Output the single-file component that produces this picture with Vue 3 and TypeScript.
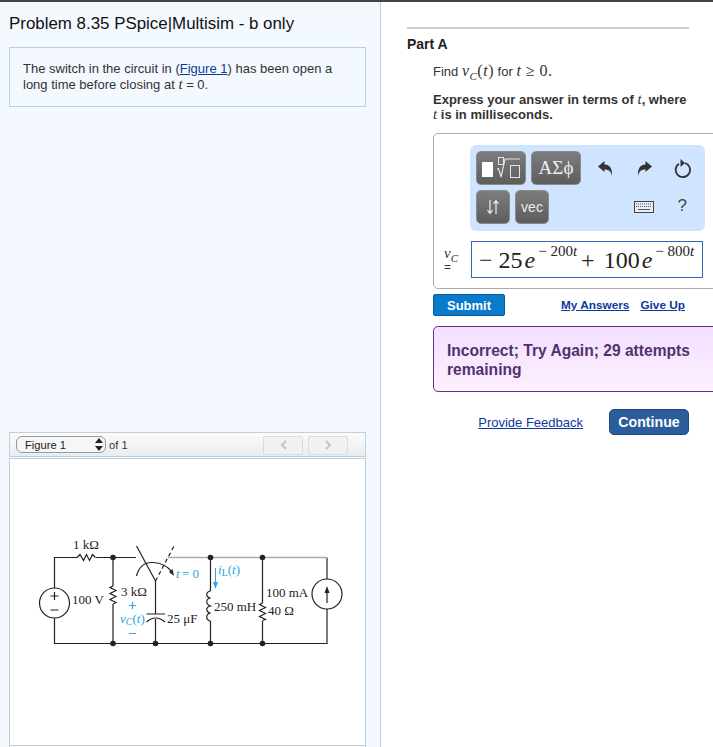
<script setup lang="ts">
interface Label {
  text: string
  x: number
  y: number
  blue?: boolean
  italic?: boolean
}

// circuit labels sit in page coordinates, the svg viewBox starts at the panel corner
const labels: Label[] = [
  { text: '1 kΩ', x: 73, y: 548 },
  { text: '100 V', x: 72, y: 603 },
  { text: '3 kΩ', x: 121, y: 595 },
  { text: '25 μF', x: 167, y: 622 },
  { text: '250 mH', x: 214, y: 610 },
  { text: '100 mA', x: 266, y: 596 },
  { text: '40 Ω', x: 268, y: 614 },
  { text: '= 0', x: 182, y: 577, blue: true },
  { text: 't', x: 176, y: 577, blue: true, italic: true },
]

const nodes: [number, number][] = [
  [113, 556.5], [210.5, 556.5], [262.5, 556.5],
  [113, 642.5], [155.5, 642.5], [210.5, 642.5], [262.5, 642.5],
]
</script>

<template>
  <div class="page">
    <section class="left">
      <h1 class="title">Problem 8.35 PSpice|Multisim - b only</h1>
      <div class="intro">
        The switch in the circuit in (<a class="link">Figure 1</a>) has been open a<br />
        long time before closing at <i class="math">t</i> = 0.
      </div>

      <div class="fig-bar">
        <div class="fig-select">
          <span>Figure 1</span>
          <svg width="8" height="13" viewBox="0 0 8 13"><path d="M4 0 8 5H0ZM4 13 0 8H8Z" fill="#222" /></svg>
        </div>
        <span class="fig-of">of 1</span>
        <div class="fig-nav">
          <button class="fig-btn">
            <svg width="7" height="10" viewBox="0 0 7 10"><path d="M6 1 2 5l4 4" fill="none" stroke="#c4c4c4" stroke-width="2" /></svg>
          </button>
          <button class="fig-btn">
            <svg width="7" height="10" viewBox="0 0 7 10"><path d="M1 1l4 4-4 4" fill="none" stroke="#c4c4c4" stroke-width="2" /></svg>
          </button>
        </div>
      </div>

      <div class="fig-panel">
        <svg class="circuit" width="355" height="286" viewBox="10 458 355 286">
          <!-- wires -->
          <g fill="none" stroke="#222" stroke-width="1.2">
            <path d="M77 556.500H54.500V587M54.500 617V642.500H327V608M327 578V556.500" />
            <path d="M96 556.500H136M113 556.500V585M113 603V642.500" />
            <path d="M155.500 580V613M155.500 618V642.500M146.500 613H165M146.500 621Q155.500 613 165 621" />
            <path d="M210.500 556.500V590M210.500 620V642.500M262.500 556.500V602M262.500 620V642.500" />
            <path d="M77 556.500l3-3 3.500 6 3-6 3 6 3-6 3 3" />
            <path d="M113 585l-3 1.500 6 3-6 3 6 3-6 3 6 3-3 1.500" />
            <path d="M262.500 602l-3 1.500 6 3-6 3 6 3-6 3 6 3-3 1" />
            <path d="M210.500 590c-5 1-5 6 0 7-5 1-5 6 0 8-5 1-5 6 0 7-5 1-5 7 0 8" />
            <path d="M155.500 580 136.500 545" />
            <path d="M155.500 580 174 545" stroke-dasharray="4 3" />
            <path d="M136.500 575Q140 561 153 561.500Q165 562 172 571" />
            <circle cx="54.500" cy="602" r="15" />
            <circle cx="327" cy="593" r="15" />
            <path d="M54.500 591v8M50.500 595h8M50.500 609h8" />
            <path d="M327 602v-14" />
          </g>
          <path d="M168 556.500H327" stroke="#aaa" stroke-width="1.500" fill="none" />
          <path d="M327 585l-2.500 7h5ZM174 575l-5-4 3.500-3Z" fill="#222" />
          <circle v-for="n in nodes" :key="n.join()" :cx="n[0]" :cy="n[1]" r="2.800" fill="#222" />
          <path d="M215.500 567V584" stroke="#2aa7dd" stroke-width="1" />
          <path d="M215.500 588l-2.500-7h5Z" fill="#2aa7dd" />

          <!-- labels -->
          <text
            v-for="l in labels"
            :key="l.text"
            :x="l.x"
            :y="l.y"
            class="c-text"
            :class="{ 'c-blue': l.blue, 'c-italic': l.italic }"
          >{{ l.text }}</text>
          <text x="120" y="622" class="c-text c-blue"><tspan class="c-italic">v</tspan><tspan dy="2" font-size="10" class="c-italic">C</tspan><tspan dy="-2">(</tspan><tspan class="c-italic">t</tspan>)</text>
          <text x="218" y="573" class="c-text c-blue"><tspan class="c-italic">i</tspan><tspan dy="2" font-size="10">L</tspan><tspan dy="-2">(</tspan><tspan class="c-italic">t</tspan>)</text>
          <path d="M129 604.500h7M132.500 601v7M129 632.500h7" stroke="#2aa7dd" stroke-width="1.200" fill="none" />
        </svg>
      </div>
      <div class="fig-next"></div>
    </section>

    <section class="right">
      <hr class="rule" />
      <h2 class="part">Part A</h2>
      <p class="find">
        Find <span class="math"><i>v</i><sub><i>C</i></sub>(<i>t</i>)</span> for <span class="math"><i>t</i> ≥ 0.</span>
      </p>
      <p class="express">
        Express your answer in terms of <i class="math plain">t</i>, where<br />
        <i class="math plain">t</i> is in milliseconds.
      </p>

      <div class="answer">
        <div class="toolbar">
          <div class="tool-row">
            <button class="tool tool-templates">
              <svg width="40" height="28" viewBox="0 0 40 28">
                <rect x="1" y="8" width="11" height="15" fill="#fff" />
                <rect x="17.500" y="3.500" width="5" height="7" fill="none" stroke="#e4e4e4" />
                <path d="M16 15l1.500-.5L20 23l4-18h15" fill="none" stroke="#e4e4e4" stroke-width="1.200" />
                <rect x="29.500" y="11.500" width="9" height="12" fill="none" stroke="#e4e4e4" />
              </svg>
            </button>
            <button class="tool tool-symbols">ΑΣϕ</button>
            <div class="tool-icons">
              <svg width="15" height="17" viewBox="0 0 15 17"><path d="M0 6.500 6.500 1v3.500c4.500 0 8 3 7.500 11.500-1-4.500-3-6.500-7.500-6.500V12Z" fill="#333" /></svg>
              <svg width="15" height="17" viewBox="0 0 15 17"><path d="M15 6.500 8.500 1v3.500C4 4.500.5 7.500 1 16c1-4.500 3-6.500 7.500-6.500V12Z" fill="#333" /></svg>
              <svg class="reload" width="18" height="20" viewBox="0 0 18 20"><path d="M11 5A7.200 7.200 0 1 1 5 5.800" fill="none" stroke="#333" stroke-width="1.800" /><path d="M6.500 1v8l4.500-4Z" fill="#333" /></svg>
            </div>
          </div>
          <div class="tool-row">
            <button class="tool tool-updown">
              <svg width="14" height="16" viewBox="0 0 14 16"><path d="M4 1v13M1.500 11 4 14.500 6.500 11M10 15V2M7.500 5 10 1.500 12.500 5" fill="none" stroke="#eee" stroke-width="1.200" /></svg>
            </button>
            <button class="tool tool-vec">vec</button>
            <div class="tool-icons tool-icons-low">
              <svg width="20" height="12" viewBox="0 0 20 12">
                <rect x=".5" y=".5" width="19" height="11" fill="#e8eef4" stroke="#444" />
                <path d="M2 3h16M2 5.500h16" stroke="#556" stroke-dasharray="1 1" />
                <path d="M4 8.500h12" stroke="#556" />
              </svg>
              <span class="help">?</span>
            </div>
          </div>
        </div>

        <div class="answer-row">
          <div class="answer-label">
            <span class="math"><i>v</i><sub><i>C</i></sub></span>
            <span class="eq">=</span>
          </div>
          <div class="math-input">
            − 25<i>e</i><sup>− 200<i>t</i></sup><span class="plus">+</span>100<i>e</i><sup>− 800<i>t</i></sup>
          </div>
        </div>
      </div>

      <div class="actions">
        <button class="submit">Submit</button>
        <div class="action-links">
          <a class="link">My Answers</a>
          <a class="link">Give Up</a>
        </div>
      </div>

      <div class="feedback">Incorrect; Try Again; 29 attempts remaining</div>

      <div class="footer">
        <a class="link">Provide Feedback</a>
        <button class="continue">Continue</button>
      </div>
    </section>
  </div>
</template>

<style>
html,
body {
  margin: 0;
  background: #fff;
}
</style>

<style scoped>
.page {
  display: flex;
  width: 713px;
  height: 747px;
  overflow: hidden;
  border-top: 2px solid #444;
  box-sizing: border-box;
  font-family: "Liberation Sans", Arial, sans-serif;
  color: #333;
}

button {
  font-family: inherit;
  padding: 0;
  cursor: pointer;
}

.link {
  color: #0b3a9e;
  text-decoration: underline;
}

.math {
  font-family: "Liberation Serif", "DejaVu Serif", serif;
  line-height: 0;
}

.math sub {
  font-size: 11px;
  line-height: 0;
}

/* left column */
.left {
  flex: none;
  width: 381px;
  box-sizing: border-box;
  padding: 0 14px 0 9px;
  background: #f4f8ff;
  border-right: 1px solid #b9cfe2;
}

.title {
  margin: 12px 0 0;
  font-size: 16.900px;
  line-height: 20px;
  font-weight: 400;
  color: #111;
}

.intro {
  margin-top: 13px;
  padding: 13px 13px 0;
  height: 60px;
  box-sizing: border-box;
  border: 1px solid #b9cfe2;
  font-size: 13px;
  line-height: 16px;
}

.intro .math {
  font-size: 15px;
}

.fig-bar {
  display: flex;
  align-items: center;
  height: 25px;
  box-sizing: border-box;
  margin-top: 325px;
  padding: 0 17px 0 6px;
  border: 1px solid #b9cfe2;
  background: linear-gradient(#fbfbfb, #ececec);
  font-size: 11.200px;
}

.fig-select {
  display: flex;
  align-items: center;
  justify-content: space-between;
  width: 90px;
  height: 17px;
  box-sizing: border-box;
  padding: 0 2px 0 8px;
  border: 1px solid #999;
  border-radius: 6px;
  background: #f6f6f6;
  color: #222;
}

.fig-of {
  margin-left: 3px;
}

.fig-nav {
  display: flex;
  gap: 5px;
  margin-left: auto;
}

.fig-btn {
  display: flex;
  align-items: center;
  justify-content: center;
  width: 40px;
  height: 19px;
  margin-top: 1px;
  border: 1px solid #dcdcdc;
  border-radius: 2px;
  background: #f1f1f1;
}

.fig-panel {
  height: 288px;
  box-sizing: border-box;
  margin-top: 1px;
  border: 1px solid #b9cfe2;
  background: #fff;
}

.circuit {
  display: block;
}

.c-text {
  font-family: "Liberation Serif", "DejaVu Serif", serif;
  font-size: 13px;
  fill: #222;
}

.c-blue {
  fill: #2aa7dd;
}

.c-italic {
  font-style: italic;
}

.fig-next {
  height: 10px;
  border: 1px solid #b9cfe2;
  border-top: 0;
  background: #fff;
}

/* right column */
.right {
  flex: 1;
  min-width: 0;
  padding: 0 24px 0 26px;
}

.rule {
  height: 2px;
  margin: 25px 0 0;
  border: 0;
  background: #ccc;
}

.part {
  margin: 6px 0 0;
  font-size: 14px;
  line-height: 18px;
  color: #222;
}

.find {
  margin: 10px 0 0 26px;
  font-size: 13px;
  line-height: 18px;
}

.find .math {
  font-size: 16px;
  letter-spacing: 0.5px;
}

.express {
  margin: 11px 0 0 26px;
  font-size: 13px;
  line-height: 15px;
  font-weight: 700;
}

.math.plain {
  font-weight: 400;
  font-size: 15px;
}

.answer {
  margin: 11px -40px 0 26px;
  height: 156px;
  box-sizing: border-box;
  padding: 11px 0 0 36px;
  border: 1px solid #aaa;
  border-radius: 5px;
}

.toolbar {
  width: 235px;
  height: 86px;
  box-sizing: border-box;
  padding: 6px;
  border-radius: 6px;
  background: #cfe4ff;
}

.tool-row {
  display: flex;
  gap: 5px;
  height: 34px;
  margin-bottom: 5px;
}

.tool {
  height: 34px;
  border: 1px solid #8a8a8a;
  border-radius: 5px;
  background: linear-gradient(#7d7d7d, #5d5d5d);
  color: #eee;
  display: flex;
  align-items: center;
  justify-content: center;
}

.tool-templates {
  width: 50px;
}

.tool-symbols {
  width: 50px;
  font-family: "Liberation Serif", "DejaVu Serif", serif;
  font-size: 19px;
}

.tool-updown {
  width: 34px;
}

.tool-vec {
  width: 34px;
  font-size: 14px;
}

.tool-icons {
  flex: 1;
  display: flex;
  align-items: center;
  gap: 24px;
  padding-left: 12px;
}

.reload {
  margin-left: -2px;
}

.tool-icons-low {
  justify-content: flex-end;
  padding-right: 12px;
  gap: 24px;
}

.help {
  font-size: 17px;
  color: #444;
  line-height: 16px;
  margin-top: -2px;
}

.answer-row {
  display: flex;
  align-items: center;
  margin: 10px 0 0 -26px;
}

.answer-label {
  display: flex;
  flex-direction: column;
  width: 26px;
  box-sizing: border-box;
  font-size: 15px;
  line-height: 14px;
  margin-right: 1px;
}

.answer-label .math {
  line-height: 14px;
}

.eq {
  font-size: 12px;
}

.math-input {
  width: 232px;
  height: 37px;
  box-sizing: border-box;
  padding-left: 7px;
  border: 1px solid #3366bb;
  background: #fff;
  font-family: "Liberation Serif", serif;
  font-size: 24px;
  line-height: 37px;
  color: #222;
  white-space: nowrap;
}

.math-input i {
  margin-left: 2px;
}

.math-input sup i {
  margin-left: 0;
}

.math-input sup {
  font-size: 15px;
  line-height: 0;
  vertical-align: 12px;
  margin-left: 3px;
}

.plus {
  margin: 0 9px 0 4px;
}

.actions {
  display: flex;
  align-items: center;
  margin: 5px 0 0 26px;
}

.submit {
  width: 72px;
  height: 22px;
  border: 1px solid #0a5e9e;
  border-radius: 2px;
  background: #0a7acb;
  color: #fff;
  font-size: 13px;
  font-weight: 700;
}

.action-links {
  margin-left: auto;
  display: flex;
  gap: 11px;
  font-size: 11.800px;
  font-weight: 700;
  margin-right: 4px;
}

.feedback {
  margin: 10px -40px 0 26px;
  height: 66px;
  box-sizing: border-box;
  padding: 14px 30px 0 13px;
  border: 1px solid #6a2f8a;
  border-radius: 5px;
  background: linear-gradient(#f2dfff, #fdf0ff);
  color: #523070;
  font-size: 15.600px;
  line-height: 19px;
  font-weight: 700;
}

.footer {
  display: flex;
  align-items: center;
  justify-content: flex-end;
  gap: 26px;
  margin-top: 17px;
  font-size: 13px;
}

.continue {
  width: 80px;
  height: 26px;
  border: 1px solid #1c4a80;
  border-radius: 5px;
  background: #2b5c9b;
  color: #fff;
  font-size: 14.200px;
  font-weight: 700;
}
</style>
